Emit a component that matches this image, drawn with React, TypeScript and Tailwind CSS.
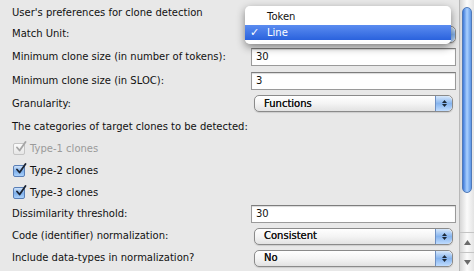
import type { ReactNode } from 'react';

// ---------------------------------------------------------------------------
// Small Aqua-style controls
// ---------------------------------------------------------------------------
function TextField({ value }: { value: string }) {
  return (
    <div className="flex h-[18px] w-[205px] items-center border border-[#9a9a9a] border-t-[#7d7d7d] bg-white pl-[4px] shadow-[inset_0_1px_1px_rgba(0,0,0,0.15)]">
      {value}
    </div>
  );
}

function Stepper() {
  return (
    <div className="flex h-full w-[17px] flex-col items-center justify-center gap-[1px] rounded-r-[5px] border-l border-[#6d8fc2] bg-gradient-to-b from-[#d7e8fb] via-[#86b4ee] to-[#bfdcff]">
      <svg width="5" height="3" viewBox="0 0 5 3" aria-hidden="true">
        <path d="M0 3 L2.5 0 L5 3 Z" fill="#1d2a3a" />
      </svg>
      <svg width="5" height="3" viewBox="0 0 5 3" aria-hidden="true">
        <path d="M0 0 L2.5 3 L5 0 Z" fill="#1d2a3a" />
      </svg>
    </div>
  );
}

function Select({ value }: { value?: string }) {
  return (
    <div className="flex h-[17px] w-[199px] items-center overflow-hidden rounded-[5px] border border-[#8a8a8a] bg-gradient-to-b from-white via-[#f4f4f4] to-[#e2e2e2] shadow-[0_1px_1px_rgba(0,0,0,0.12)]">
      <span className="flex-1 pl-[9px] text-[#1a1a1a] [text-shadow:0_0_0.4px_#000]">{value}</span>
      <Stepper />
    </div>
  );
}

function CheckBox({ disabled }: { disabled?: boolean }) {
  return (
    <span
      className={
        disabled
          ? 'relative mr-[5px] inline-block size-[12px] rounded-[2px] border border-[#c4c4c4] bg-gradient-to-b from-[#fbfbfb] to-[#e6e6e6]'
          : 'relative mr-[5px] inline-block size-[12px] rounded-[2px] border border-[#5a7fb6] bg-gradient-to-b from-[#cfe3fb] via-[#7fb0ea] to-[#a9d0fb]'
      }
    >
      <svg className="absolute left-[1px] top-[-3px]" width="12" height="12" viewBox="0 0 12 12" aria-hidden="true">
        <path
          d="M2 6.5 L4.6 9.5 L10.5 1"
          fill="none"
          stroke={disabled ? '#a5a5a5' : '#1b2433'}
          strokeWidth="1.8"
          strokeLinecap="round"
          strokeLinejoin="round"
        />
      </svg>
    </span>
  );
}

function Row({ h, label, children, className = '' }: { h: string; label?: ReactNode; children?: ReactNode; className?: string }) {
  return (
    <div className={`flex items-center justify-between ${h} ${className}`}>
      <div className="flex items-center">{label}</div>
      {children}
    </div>
  );
}

// ---------------------------------------------------------------------------
// Scroll bar (vertical, Aqua)
// ---------------------------------------------------------------------------
function ScrollBar() {
  return (
    <div className="flex w-[15px] flex-col border-l border-[#b8b8b8] bg-gradient-to-r from-[#d6d6d6] via-[#fbfbfb] to-[#e4e4e4]">
      <div className="h-[7px]" />
      <div className="mx-auto h-[186px] w-[10px] rounded-full border border-[#4f79b8] bg-gradient-to-r from-[#3d78d8] via-[#a9d0ff] to-[#5e97e6]" />
      <div className="flex-1" />
      <div className="flex h-[20px] items-center justify-center border-t border-[#c4c4c4]">
        <svg width="7" height="5" viewBox="0 0 7 5" aria-hidden="true">
          <path d="M0 5 L3.5 0 L7 5 Z" fill="#6b6b6b" />
        </svg>
      </div>
      <div className="flex h-[19px] items-center justify-center border-t border-[#c4c4c4]">
        <svg width="7" height="5" viewBox="0 0 7 5" aria-hidden="true">
          <path d="M0 0 L3.5 5 L7 0 Z" fill="#6b6b6b" />
        </svg>
      </div>
    </div>
  );
}

// ---------------------------------------------------------------------------
// Open popup menu for "Match Unit"
// ---------------------------------------------------------------------------
function PopupMenu() {
  return (
    <div className="absolute left-[245px] top-[6px] z-10 w-[206px] rounded-[5px] bg-white/[0.97] pb-[4px] pt-[3px] shadow-[0_3px_8px_rgba(0,0,0,0.45)]">
      <div className="flex h-[16px] items-center pl-[22px]">Token</div>
      <div className="relative flex h-[15px] items-center bg-gradient-to-b from-[#5b8cf0] to-[#2a62dd] pl-[22px] text-white">
        <span className="absolute left-[5px] top-[2px] text-[11px]">✓</span>
        Line
      </div>
    </div>
  );
}

export default function App() {
  return (
    <div
      className="relative flex h-[271px] w-[474px] overflow-hidden bg-[#e8e8e8] text-[10px] leading-none text-[#111]"
      style={{ fontFamily: '"DejaVu Sans", "Liberation Sans", sans-serif' }}
    >
      <div className="flex flex-1 flex-col pl-[12px] pr-[3px] pt-[3px]">
        <Row h="h-[20px]" label="User's preferences for clone detection" />
        <Row h="h-[22px]" label="Match Unit:">
          <Select />
        </Row>
        <Row h="h-[24px]" label="Minimum clone size (in number of tokens):">
          <TextField value="30" />
        </Row>
        <Row h="h-[23px]" label="Minimum clone size (in SLOC):">
          <TextField value="3" />
        </Row>
        <Row h="h-[23px]" label="Granularity:" className="pr-[3px]">
          <Select value="Functions" />
        </Row>
        <Row h="h-[23px]" label="The categories of target clones to be detected:" />
        <Row
          h="h-[22px]"
          label={
            <span className="flex items-center pl-[1px] text-[#9a9a9a]">
              <CheckBox disabled />
              Type-1 clones
            </span>
          }
        />
        <Row
          h="h-[22px]"
          label={
            <span className="flex items-center pl-[1px]">
              <CheckBox />
              Type-2 clones
            </span>
          }
        />
        <Row
          h="h-[21px]"
          label={
            <span className="flex items-center pl-[1px]">
              <CheckBox />
              Type-3 clones
            </span>
          }
        />
        <Row h="h-[22px]" label="Dissimilarity threshold:">
          <TextField value="30" />
        </Row>
        <Row h="h-[22px]" label="Code (identifier) normalization:" className="pr-[3px]">
          <Select value="Consistent" />
        </Row>
        <Row h="h-[22px]" label="Include data-types in normalization?" className="pr-[3px]">
          <Select value="No" />
        </Row>
      </div>
      <ScrollBar />
      <PopupMenu />
    </div>
  );
}
